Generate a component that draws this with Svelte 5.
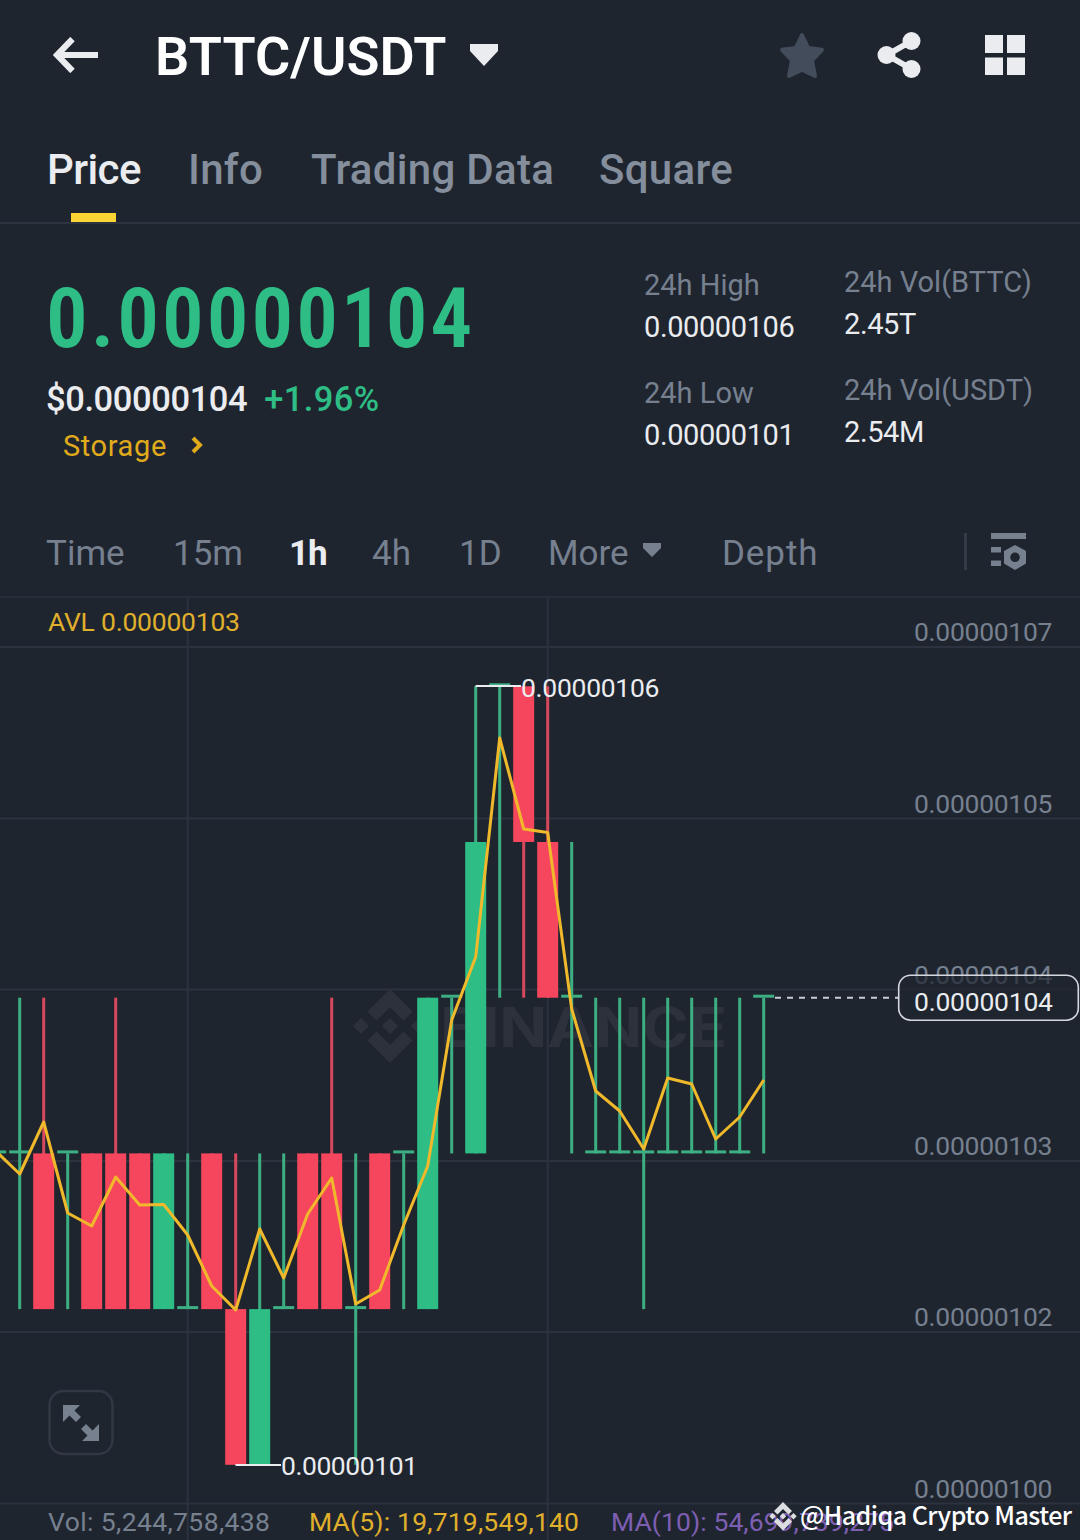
<script lang="ts">
  type Candle = { open: number; close: number; high: number; low: number; up: boolean; avl: number };

  let activeTab = $state('Price');
  let activeInterval = $state('1h');

  const tabs = ['Price', 'Info', 'Trading Data', 'Square'];
  const intervals = ['Time', '15m', '1h', '4h', '1D', 'More', 'Depth'];

  const stats = [
    [
      { label: '24h High', value: '0.00000106' },
      { label: '24h Low', value: '0.00000101' },
    ],
    [
      { label: '24h Vol(BTTC)', value: '2.45T' },
      { label: '24h Vol(USDT)', value: '2.54M' },
    ],
  ];

  const gridLines = [
    { y: 647, label: '0.00000107' },
    { y: 818.5, label: '0.00000105' },
    { y: 989.5, label: '0.00000104' },
    { y: 1161, label: '0.00000103' },
    { y: 1332, label: '0.00000102' },
    { y: 1503.5, label: '0.00000100' },
  ];

  // open, close, high, low in units of 1e-8; avl is already in chart space
  const rows: [number, number, number, number, boolean, number][] = [
    [103, 103, 103, 103, true, 1151],
    [103, 103, 104, 102, true, 1174],
    [103, 102, 104, 102, false, 1122],
    [103, 103, 103, 102, true, 1213],
    [103, 102, 103, 102, false, 1226],
    [103, 102, 104, 102, false, 1177],
    [103, 102, 103, 102, false, 1205],
    [102, 103, 103, 102, true, 1204.5],
    [102, 102, 103, 102, true, 1235],
    [103, 102, 103, 102, false, 1286],
    [102, 101, 103, 101, false, 1310],
    [101, 102, 103, 101, true, 1229],
    [102, 102, 103, 102, true, 1278],
    [103, 102, 103, 102, false, 1214],
    [103, 102, 104, 102, false, 1178],
    [102, 102, 103, 101, true, 1304],
    [103, 102, 103, 102, false, 1290],
    [103, 103, 103, 102, true, 1225],
    [102, 104, 104, 102, true, 1166],
    [104, 104, 104, 103, true, 1020],
    [103, 105, 106, 103, true, 957],
    [106, 106, 106, 104, true, 738],
    [106, 105, 106, 104, false, 829],
    [105, 104, 106, 104, false, 832.5],
    [104, 104, 105, 103, true, 1009],
    [103, 103, 104, 103, true, 1091],
    [103, 103, 104, 103, true, 1111],
    [103, 103, 104, 102, true, 1149],
    [103, 103, 104, 103, true, 1078],
    [103, 103, 104, 103, true, 1084],
    [103, 103, 104, 103, true, 1139],
    [103, 103, 104, 103, true, 1117],
    [104, 104, 104, 103, true, 1080],
  ];

  const candles: Candle[] = rows.map(([open, close, high, low, up, avl]) => ({ open, close, high, low, up, avl }));

  const STEP = 24;
  const BODY = 21;

  function xOf(i: number) {
    return -4.3 + i * STEP;
  }

  function yOf(price: number) {
    return 997.7 + (104 - price) * 155.7;
  }

  const avlPoints = candles.map((c, i) => `${xOf(i)},${c.avl}`).join(' ');
</script>

<div class="screen">
  <header class="header">
    <svg class="back" viewBox="0 0 46 36" width="46" height="36">
      <path d="M45 18H5M19.500 2L4 18l15.500 16" fill="none" stroke="currentColor" stroke-width="6.200" />
    </svg>
    <h1>BTTC/USDT</h1>
    <svg viewBox="0 0 28 22" width="28" height="22">
      <path d="M0 0h28v7L14 22 0 7z" fill="currentColor" />
    </svg>
    <div class="actions">
      <svg class="star" viewBox="0 0 46 48" width="46" height="48">
        <path d="M23 4l6.200 13L43 18.800 33 29.500 36 45 23 38.800 10 45l3-15.500L3 18.800 16.800 17z" fill="currentColor" stroke="currentColor" stroke-width="4" stroke-linejoin="round" />
      </svg>
      <svg viewBox="0 0 44 48" width="44" height="48">
        <path d="M34.500 10L10 24l24.500 14" fill="none" stroke="currentColor" stroke-width="6" />
        <circle cx="9.500" cy="24" r="9" fill="currentColor" />
        <circle cx="34.500" cy="10" r="9" fill="currentColor" />
        <circle cx="34.500" cy="38" r="9" fill="currentColor" />
      </svg>
      <svg class="grid-icon" viewBox="0 0 40 40" width="40" height="40">
        <path d="M0 0h18v18H0zM22 0h18v18H22zM0 22.500h18v17.500H0zM22 22.500h18v17.500H22z" fill="currentColor" />
      </svg>
    </div>
  </header>

  <nav class="tabs">
    {#each tabs as tab}
      <button class:active={activeTab === tab} onclick={() => (activeTab = tab)}>{tab}</button>
    {/each}
  </nav>

  <section class="summary">
    <div class="quote">
      <div class="price">0.00000104</div>
      <div class="fiat">
        <span>$0.00000104</span>
        <span class="change">+1.96%</span>
      </div>
      <div class="tag">
        <span>Storage</span>
        <svg viewBox="0 0 12 18" width="12" height="18">
          <path d="M2 2l7 7-7 7" fill="none" stroke="currentColor" stroke-width="4" />
        </svg>
      </div>
    </div>
    {#each stats as column}
      <dl class="stats">
        {#each column as stat}
          <div>
            <dt>{stat.label}</dt>
            <dd>{stat.value}</dd>
          </div>
        {/each}
      </dl>
    {/each}
  </section>

  <div class="intervals">
    {#each intervals as item}
      <button class:active={activeInterval === item} onclick={() => (activeInterval = item)}>
        {item}
        {#if item === 'More'}
          <svg viewBox="0 0 18 14" width="18" height="14">
            <path d="M0 0h18v5L9 14 0 5z" fill="currentColor" />
          </svg>
        {/if}
      </button>
    {/each}
    <div class="settings">
      <svg viewBox="0 0 35 37" width="35" height="37">
        <path d="M0 0h35v6H0zM0 14h10v5.500H0zM0 27.500h10V33H0z" fill="currentColor" />
        <path d="M24 12l11 6v12.500L24 37l-11-6.500V18zM24 19.500a4.800 4.800 0 1 0 0 9.600 4.800 4.800 0 1 0 0-9.600z" fill="currentColor" fill-rule="evenodd" />
      </svg>
    </div>
  </div>

  <svg class="chart" viewBox="0 598 1080 942" width="1080" height="942">
    <g class="grid">
      {#each gridLines as line}
        <line x1="0" x2="1080" y1={line.y} y2={line.y} />
      {/each}
      <line x1="187.700" x2="187.700" y1="598" y2="1540" />
      <line x1="547.700" x2="547.700" y1="598" y2="1540" />
    </g>

    <g class="brand">
      <path d="M390 989l22.500 22.500-9 9L390 1007l-13.500 13.500-9-9zM390 1063l22.500-22.500-9-9L390 1045l-13.500-13.500-9 9zM390 1018l8 8-8 8-8-8zM361 1018l8 8-8 8-8-8zM419 1018l8 8-8 8-8-8z" />
      <text x="440" y="1046.500" textLength="287" lengthAdjust="spacingAndGlyphs">BINANCE</text>
    </g>

    {#each gridLines as line}
      <text class="axis" x="914" y={line.y - 6} textLength="138.500">{line.label}</text>
    {/each}

    {#each candles as c, i}
      <g class={c.up ? 'up' : 'down'}>
        {#if c.high !== c.low}
          <rect class="wick" x={xOf(i) - 1.5} y={yOf(c.high)} width="3" height={yOf(c.low) - yOf(c.high)} />
        {/if}
        {#if c.open === c.close}
          <rect class="wick" x={xOf(i) - BODY / 2} y={yOf(c.open) - 3} width={BODY} height="3" />
        {:else}
          <rect
            x={xOf(i) - BODY / 2}
            y={yOf(Math.max(c.open, c.close))}
            width={BODY}
            height={Math.abs(yOf(c.open) - yOf(c.close))}
          />
        {/if}
      </g>
    {/each}

    <polyline class="avl" points={avlPoints} />
    <text class="avl-label" x="48" y="630.500" textLength="192">AVL 0.00000103</text>

    <g class="marker">
      <path d="M475.500 686H521M235.500 1465H281" />
      <text x="521" y="696.500" textLength="138.500">0.00000106</text>
      <text x="281" y="1475" textLength="137">0.00000101</text>
    </g>

    <g class="last">
      <line x1="775" x2="898" y1="997.800" y2="997.800" />
      <rect x="898.700" y="975.200" width="179.600" height="45" rx="12" />
      <text x="914" y="1010.500" textLength="139">0.00000104</text>
    </g>

    <g class="expand">
      <rect x="49.500" y="1391" width="63" height="63" rx="14" />
      <path d="M63 1405h17l-5.500 5.500 6.500 6.500-5 5-6.500-6.500L63 1422zM99 1441H82l5.500-5.500-6.500-6.500 5-5 6.500 6.500L99 1424z" />
    </g>

    <g class="volume">
      <text x="48" y="1530.500" textLength="222">Vol: 5,244,758,438</text>
      <text class="ma5" x="309" y="1530.500" textLength="270">MA(5): 19,719,549,140</text>
      <text class="ma10" x="611" y="1530.500" textLength="283">MA(10): 54,699,739,275</text>
    </g>

    <g class="author">
      <path d="M783 1502l9 9-3.500 3.500-5.500-5.500-5.500 5.500-3.500-3.500zM783 1530.500l9-9-3.500-3.500-5.500 5.500-5.500-5.500-3.500 3.500zM783 1513l3.200 3.200-3.200 3.200-3.200-3.200zM772.500 1513l3.200 3.200-3.200 3.200-3.200-3.200zM793.500 1513l3.200 3.200-3.200 3.200-3.200-3.200z" />
      <text x="800" y="1525" textLength="272">@Hadiqa Crypto Master</text>
    </g>
  </svg>
</div>

<style>
  :global(body) {
    margin: 0;
    background: #1f252f;
  }
  .screen {
    width: 1080px;
    height: 1540px;
    overflow: hidden;
    display: flex;
    flex-direction: column;
    background: #1f252f;
    color: #eaecef;
    font-family: Roboto, "Liberation Sans", sans-serif;
  }
  svg {
    display: block;
    flex: none;
  }
  button {
    padding: 0;
    border: 0;
    background: none;
    font: inherit;
    letter-spacing: inherit;
    color: inherit;
    text-align: left;
    white-space: nowrap;
  }

  .header {
    display: flex;
    align-items: center;
    height: 110px;
    padding: 0 55px 0 52px;
  }
  .back {
    margin-left: 1px;
  }
  h1 {
    min-width: 315px;
    margin: 4px 0 0 56px;
    font-size: 54px;
    font-weight: 600;
    line-height: 64px;
    letter-spacing: 0.1px;
    color: #fff;
  }
  .actions {
    display: flex;
    align-items: center;
    margin-left: auto;
  }
  .actions svg {
    margin-left: 52px;
  }
  .actions .grid-icon {
    margin-left: 64px;
  }
  .star {
    color: #434c5b;
  }

  .tabs {
    display: grid;
    grid-template-columns: 140px 123px 288px auto;
    height: 112px;
    padding-left: 48px;
    border-bottom: 2px solid #2d343f;
    font-size: 42px;
    font-weight: 500;
    letter-spacing: 0.3px;
    color: #848e9c;
  }
  .tabs button {
    display: flex;
    flex-direction: column;
    justify-content: space-between;
    align-items: center;
    width: max-content;
    padding-top: 35px;
    line-height: 50px;
  }
  .tabs .active {
    margin-left: -1px;
    letter-spacing: -0.6px;
    color: #eaecef;
  }
  .tabs .active::after {
    content: "";
    width: 45px;
    height: 9px;
    background: #fcd535;
  }

  .summary {
    display: grid;
    grid-template-columns: 598px 200px auto;
    height: 286px;
    padding-left: 46px;
  }
  .price {
    margin-top: 53px;
    font-size: 83px;
    font-weight: 600;
    font-stretch: 75%;
    line-height: 84px;
    letter-spacing: 3px;
    color: #2ebd85;
  }
  .fiat {
    display: flex;
    gap: 17px;
    margin-top: 16px;
    font-size: 34.5px;
    font-weight: 500;
    line-height: 44px;
    letter-spacing: -0.4px;
  }
  .change {
    letter-spacing: 0.4px;
    color: #2ebd85;
  }
  .tag {
    display: flex;
    align-items: center;
    gap: 24px;
    margin: 5px 0 0 17px;
    font-size: 29px;
    line-height: 40px;
    letter-spacing: 0.6px;
    color: #e0ab1b;
  }
  .tag svg {
    margin-bottom: 2px;
  }
  .stats {
    display: flex;
    flex-direction: column;
    gap: 24px;
    margin: 0;
    padding-top: 40px;
    font-size: 29px;
    line-height: 42px;
  }
  .stats + .stats {
    padding-top: 37px;
  }
  .stats dt {
    color: #76808f;
  }
  .stats dd {
    margin: 0;
    letter-spacing: -0.4px;
  }

  .intervals {
    display: grid;
    grid-template-columns: 127px 116px 83px 87px 89px 174px 242px auto;
    align-items: center;
    height: 85px;
    padding: 1px 0 0 46px;
    border-bottom: 2px solid #282e39;
    font-size: 35px;
    color: #76808f;
  }
  .intervals button {
    display: flex;
    align-items: center;
    gap: 14px;
  }
  .intervals button:last-of-type {
    letter-spacing: 0.9px;
  }
  .intervals button svg {
    margin-bottom: 8px;
  }
  .intervals .active {
    font-weight: 700;
    letter-spacing: -1px;
    color: #eaecef;
  }
  .settings {
    justify-self: start;
    margin-bottom: 5px;
    padding-left: 24px;
    border-left: 3px solid #343b47;
  }

  .chart text {
    font-size: 26.5px;
  }
  .grid line {
    stroke: #2d333e;
    stroke-width: 2;
  }
  .brand {
    fill: #2c313c;
  }
  .chart .brand text {
    font-family: Inter, sans-serif;
    font-size: 55px;
    font-weight: 700;
  }
  .axis {
    fill: #76808f;
  }
  .up {
    fill: #2ebd85;
  }
  .down {
    fill: #f6465d;
  }
  .up .wick {
    fill: #3caf83;
  }
  .down .wick {
    fill: #d8485d;
  }
  .avl {
    fill: none;
    stroke: #f0b92b;
    stroke-width: 3;
    stroke-linejoin: round;
  }
  .avl-label,
  .volume .ma5 {
    fill: #e0b02c;
  }
  .marker text,
  .last text {
    fill: #eaecef;
  }
  .marker path {
    stroke: #eaecef;
    stroke-width: 2;
  }
  .last line {
    stroke: #c9ccd2;
    stroke-width: 2;
    stroke-dasharray: 6 6;
  }
  .last rect {
    fill: #1f252f;
    fill-opacity: 0.7;
    stroke: #d5d8dd;
    stroke-width: 1.6;
  }
  .expand rect {
    fill: #1f252f;
    stroke: #323843;
    stroke-width: 2.5;
  }
  .expand path {
    fill: #76808f;
  }
  .volume {
    fill: #76808f;
  }
  .volume .ma10 {
    fill: #7d5fb2;
  }
  .author {
    fill: #fff;
  }
  .author path {
    fill: #dcdde0;
  }
  .chart .author text {
    font-family: "Noto Sans CJK SC", "Noto Sans", sans-serif;
    font-size: 25px;
    font-weight: 500;
  }
</style>
